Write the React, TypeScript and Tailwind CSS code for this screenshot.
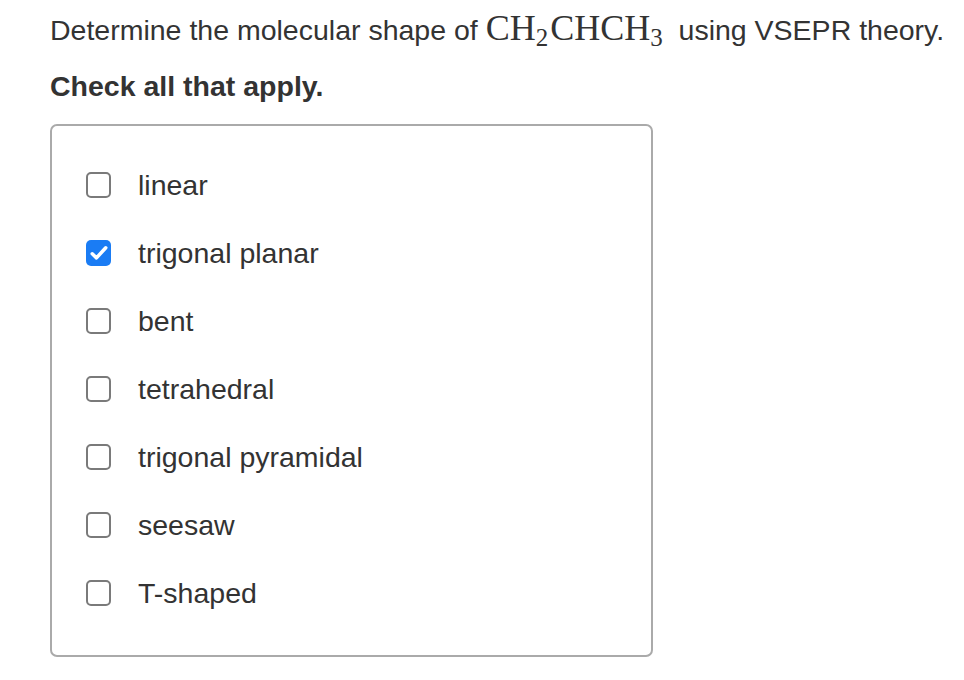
import { useState } from 'react';

const OPTIONS = [
  'linear',
  'trigonal planar',
  'bent',
  'tetrahedral',
  'trigonal pyramidal',
  'seesaw',
  'T-shaped',
];

function Box({ checked }: { checked: boolean }) {
  if (checked) {
    return (
      <span className="flex h-[26px] w-[25px] shrink-0 items-center justify-center rounded-[5px] bg-[#1a7cf4]">
        <svg width="20" height="20" viewBox="0 0 16 16" fill="none">
          <path d="M2.6 8.6l3.4 3.3L13.4 3.8" stroke="#fff" strokeWidth="2.8" strokeLinecap="round" strokeLinejoin="round" />
        </svg>
      </span>
    );
  }
  return <span className="h-[26px] w-[25px] shrink-0 rounded-[5px] border-2 border-[#7a7a7a] bg-white" />;
}

export default function App() {
  const [checked, setChecked] = useState<string[]>(['trigonal planar']);

  const toggle = (o: string) =>
    setChecked((c) => (c.includes(o) ? c.filter((x) => x !== o) : [...c, o]));

  return (
    <div className="min-h-[680px] w-[964px] bg-white pl-[50px] pt-[12px] text-[#333] font-['Liberation_Sans',Arial,sans-serif]">
      <p className="flex h-[32px] items-baseline whitespace-nowrap text-[28.5px] leading-[32px]">
        <span>Determine the molecular shape of&nbsp;</span>
        <span className="font-['Liberation_Serif',serif] text-[36px] leading-[32px]">
          CH<sub className="mr-[2px] text-[25px] leading-none">2</sub>CHCH<sub className="text-[25px] leading-none">3</sub>
        </span>
        <span>&nbsp;&nbsp;using VSEPR theory.</span>
      </p>
      <p className="mt-[26px] text-[28.5px] font-bold leading-[32px]">Check all that apply.</p>

      <div className="mt-[22px] w-[603px] rounded-[7px] border-2 border-[#aaaaaa] pb-[28px] pt-[25px] pl-[34px]">
        {OPTIONS.map((o) => (
          <label
            key={o}
            className="flex h-[68px] cursor-pointer items-center gap-[27px] text-[28.5px]"
            onClick={() => toggle(o)}
          >
            <Box checked={checked.includes(o)} />
            <span>{o}</span>
          </label>
        ))}
      </div>
    </div>
  );
}
